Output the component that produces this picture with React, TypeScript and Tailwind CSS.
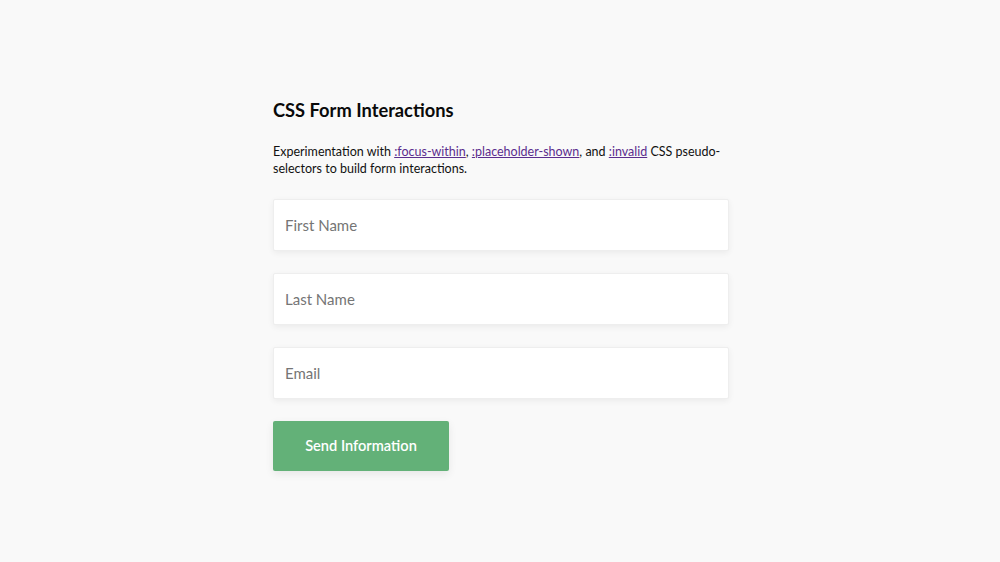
import React from "react";

export default function App() {
  return (
    <div className="flex min-h-[562px] w-full justify-center bg-[#f9f9f9] pl-[2px] font-['Lato',sans-serif] text-[#111]">
      <div className="w-[456px] pt-[98px]">
        <h1 className="text-[18.3px] font-bold leading-[24px] text-[#0a0a0a]">CSS Form Interactions</h1>
        <p className="mt-[21px] text-[12.5px] leading-[17px] text-[#111]">
          Experimentation with{" "}
          <a href="#" className="text-[#5b2d8e] underline">:focus-within</a>,{" "}
          <a href="#" className="text-[#5b2d8e] underline">:placeholder-shown</a>, and{" "}
          <a href="#" className="text-[#5b2d8e] underline">:invalid</a> CSS pseudo-selectors to build form interactions.
        </p>
        <form className="mt-[22px] flex flex-col gap-[22px]" onSubmit={(e) => e.preventDefault()}>
          {["First Name", "Last Name", "Email"].map((p) => (
            <input
              key={p}
              placeholder={p}
              className="h-[52px] w-full rounded-[2px] border border-[#eeeeee] bg-white px-[11px] text-[15px] text-[#333] shadow-[0_2px_6px_rgba(0,0,0,0.06)] outline-none placeholder:text-[#757575]"
            />
          ))}
          <div>
            <button
              type="submit"
              className="h-[50px] w-[176px] rounded-[2px] bg-[#63b178] text-[14.6px] font-semibold text-white shadow-[0_3px_8px_rgba(0,0,0,0.08)]"
            >
              Send Information
            </button>
          </div>
        </form>
      </div>
    </div>
  );
}
